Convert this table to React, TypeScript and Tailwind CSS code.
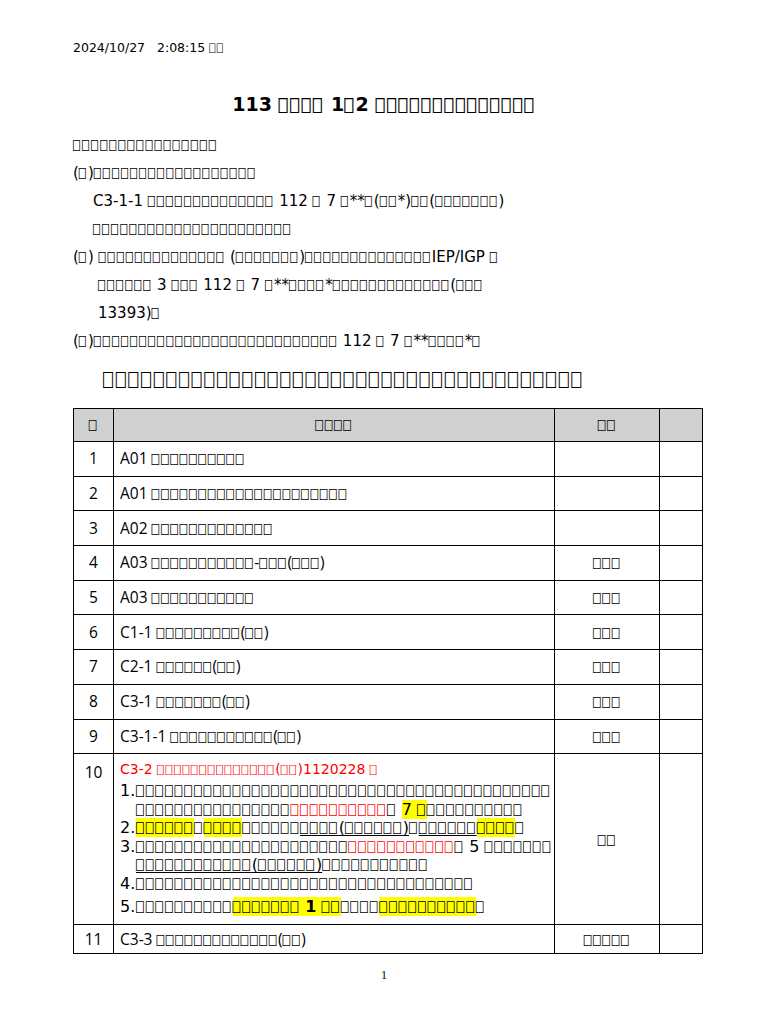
import React from "react";

// unreadable characters, drawn as narrow boxes like the reference's missing glyphs
const Bx = ({ n }: { n: number }) => (
  <span className="font-['DejaVu_Sans_Mono'] text-[0.8em] leading-none tracking-[0.152em]">
    {"⎕".repeat(n)}
  </span>
);

const Y = ({ children }: { children: React.ReactNode }) => (
  <span className="bg-[#ffff00]">{children}</span>
);
const R = ({ children }: { children: React.ReactNode }) => (
  <span className="text-[#ff0000]">{children}</span>
);
const U = ({ children }: { children: React.ReactNode }) => (
  <span className="underline underline-offset-[2px]">{children}</span>
);

type Row = { no: number; title: React.ReactNode; note?: React.ReactNode };

const rows: Row[] = [
  { no: 1, title: <>A01 <Bx n={10} /></> },
  { no: 2, title: <>A01 <Bx n={21} /></> },
  { no: 3, title: <>A02 <Bx n={13} /></> },
  { no: 4, title: <>A03 <Bx n={11} />-<Bx n={3} />(<Bx n={3} />)</>, note: <Bx n={3} /> },
  { no: 5, title: <>A03 <Bx n={11} /></>, note: <Bx n={3} /> },
  { no: 6, title: <>C1-1 <Bx n={9} />(<Bx n={2} />)</>, note: <Bx n={3} /> },
  { no: 7, title: <>C2-1 <Bx n={6} />(<Bx n={2} />)</>, note: <Bx n={3} /> },
  { no: 8, title: <>C3-1 <Bx n={7} />(<Bx n={2} />)</>, note: <Bx n={3} /> },
  { no: 9, title: <>C3-1-1 <Bx n={11} />(<Bx n={2} />)</>, note: <Bx n={3} /> },
];

const Item = ({ n, children, className = "" }: { n: number; children: React.ReactNode; className?: string }) => (
  <div className={"flex " + className}>
    <span className="w-[16px] shrink-0">{n}.</span>
    <div className="flex flex-col">{children}</div>
  </div>
);

export default function App() {
  return (
    <div className="min-h-[1024px] w-[768px] bg-white font-['DejaVu_Sans'] text-black">
      <div className="px-[73px] pt-[41px]">
        <div className="whitespace-pre text-[12.5px] leading-[14px]">
          2024/10/27   2:08:15 <Bx n={2} />
        </div>

        <h1 className="mt-[37px] text-center text-[19px] font-bold leading-[24px]">
          113 <Bx n={4} /> 1<Bx n={1} />2 <Bx n={14} />
        </h1>

        <div className="mt-[15px] whitespace-pre text-[15px] leading-[28px]">
          <div><Bx n={16} /></div>
          <div>(<Bx n={1} />)<Bx n={18} /></div>
          <div className="pl-[20px]">
            C3-1-1 <Bx n={14} /> 112 <Bx n={1} /> 7 <Bx n={1} />**<Bx n={1} />(<Bx n={2} />*)<Bx n={2} />(<Bx n={7} />)
          </div>
          <div className="pl-[20px]"><Bx n={22} /></div>
          <div>
            (<Bx n={1} />) <Bx n={14} /> (<Bx n={7} />)<Bx n={14} />IEP/IGP <Bx n={1} />
          </div>
          <div className="pl-[25px]">
            <Bx n={6} /> 3 <Bx n={3} /> 112 <Bx n={1} /> 7 <Bx n={1} />**<Bx n={4} />*<Bx n={13} />(<Bx n={3} />
          </div>
          <div className="pl-[25px]">13393)<Bx n={1} /></div>
          <div>
            (<Bx n={1} />)<Bx n={27} /> 112 <Bx n={1} /> 7 <Bx n={1} />**<Bx n={4} />*<Bx n={1} />
          </div>
        </div>

        <div className="mt-[9px] pl-[30px] text-[21px] leading-[30px]">
          <Bx n={38} />
        </div>

        <table className="mt-[14px] w-[629px] table-fixed border-collapse border-[1.5px] border-[#3a3a3a] font-['Open_Sans'] text-[15.5px]">
          <colgroup>
            <col className="w-[40px]" />
            <col className="w-[441px]" />
            <col className="w-[105px]" />
            <col className="w-[43px]" />
          </colgroup>
          <thead>
            <tr className="h-[33px] bg-[#d0d0d0]">
              <th className="border border-black font-normal"><Bx n={1} /></th>
              <th className="border border-black font-normal"><Bx n={4} /></th>
              <th className="border border-black font-normal"><Bx n={2} /></th>
              <th className="border border-black"></th>
            </tr>
          </thead>
          <tbody>
            {rows.map((r) => (
              <tr key={r.no} className="h-[34.7px]">
                <td className="border border-black text-center">{r.no}</td>
                <td className="border border-black px-[6px]">{r.title}</td>
                <td className="border border-black text-center">{r.note}</td>
                <td className="border border-black"></td>
              </tr>
            ))}
            <tr className="h-[169px]">
              <td className="border border-black pt-[7px] text-center align-top">10</td>
              <td className="border border-black px-[6px] pt-[6px] pb-[8px] align-top font-['DejaVu_Sans']">
                <div className="text-[14px] leading-[18px] text-[#ff0000]">
                  C3-2 <Bx n={14} />(<Bx n={2} />)1120228 <Bx n={1} />
                </div>
                <div className="mt-[4px] whitespace-pre text-[16px] leading-[18.5px]">
                  <Item n={1}>
                    <span><Bx n={43} /></span>
                    <span>
                      <Bx n={16} /><R><Bx n={10} /></R><Bx n={1} /> <Y>7 <Bx n={1} /></Y><Bx n={10} />
                    </span>
                  </Item>
                  <Item n={2}>
                    <span>
                      <Y><Bx n={6} /></Y><Bx n={1} /><Y><Bx n={4} /></Y><Bx n={6} />
                      <U><Bx n={4} />(<Bx n={6} />)</U><Bx n={1} /><U><Bx n={6} /></U><Y><Bx n={4} /></Y><Bx n={1} />
                    </span>
                  </Item>
                  <Item n={3}>
                    <span>
                      <Bx n={22} /><R><Bx n={11} /></R><Bx n={1} /> 5 <Bx n={7} />
                    </span>
                    <span>
                      <U><Bx n={12} />(<Bx n={6} />)</U><Bx n={11} />
                    </span>
                  </Item>
                  <Item n={4}>
                    <span><Bx n={35} /></span>
                  </Item>
                  <Item n={5} className="mt-[4.5px]">
                    <span>
                      <Bx n={10} /><Y><Bx n={7} /> <b>1</b> <Bx n={2} /></Y><Bx n={4} /><Y><Bx n={10} /></Y><Bx n={1} />
                    </span>
                  </Item>
                </div>
              </td>
              <td className="border border-black text-center"><Bx n={2} /></td>
              <td className="border border-black"></td>
            </tr>
            <tr className="h-[29px]">
              <td className="border border-black text-center">11</td>
              <td className="border border-black px-[6px]">C3-3 <Bx n={13} />(<Bx n={2} />)</td>
              <td className="border border-black text-center"><Bx n={5} /></td>
              <td className="border border-black"></td>
            </tr>
          </tbody>
        </table>

        <div className="mt-[13px] pb-[40px] text-center font-['Liberation_Serif'] text-[12px] leading-[16px]">1</div>
      </div>
    </div>
  );
}
